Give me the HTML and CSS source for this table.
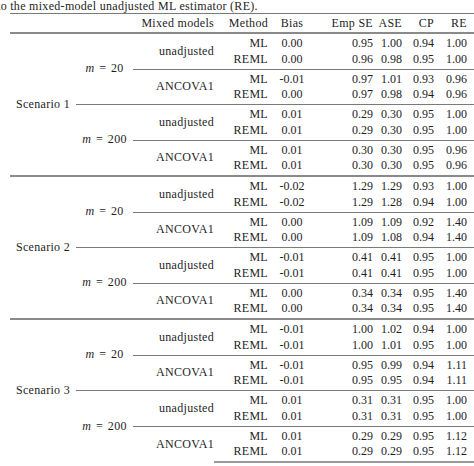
FILE: index.html
```html
<!DOCTYPE html>
<html>
<head>
<meta charset="utf-8">
<link rel="stylesheet" href="styles.css">
</head>
<body>
<div class="caption">to the mixed-model unadjusted ML estimator (RE).</div>
<table class="tbl">
<colgroup>
<col class="c-scen"><col class="c-m"><col class="c-mix"><col class="c-meth"><col class="c-bias"><col class="c-emp"><col class="c-ase"><col class="c-cp"><col class="c-re">
</colgroup>
<thead>
<tr><th></th><th></th><th class="r">Mixed models</th><th class="r">Method</th><th class="c">Bias</th><th class="r">Emp SE</th><th class="r">ASE</th><th class="r">CP</th><th class="r last">RE</th></tr>
</thead>
<tbody>
<tr class="a"><td class="lab" rowspan="8">Scenario 1</td><td class="lab" rowspan="4"><i>m</i><span class="eq">=</span>20</td><td class="lab mix" rowspan="2">unadjusted</td><td class="r w">ML</td><td class="c">0.00</td><td class="r">0.95</td><td class="r">1.00</td><td class="r">0.94</td><td class="r last">1.00</td></tr>
<tr class="b"><td class="r w">REML</td><td class="c">0.00</td><td class="r">0.96</td><td class="r">0.98</td><td class="r">0.95</td><td class="r last">1.00</td></tr>
<tr class="a g"><td class="lab mix" rowspan="2">ANCOVA1</td><td class="r w">ML</td><td class="c">-0.01</td><td class="r">0.97</td><td class="r">1.01</td><td class="r">0.93</td><td class="r last">0.96</td></tr>
<tr class="b"><td class="r w">REML</td><td class="c">0.00</td><td class="r">0.97</td><td class="r">0.98</td><td class="r">0.94</td><td class="r last">0.96</td></tr>
<tr class="a g"><td class="lab" rowspan="4"><i>m</i><span class="eq">=</span>200</td><td class="lab mix" rowspan="2">unadjusted</td><td class="r w">ML</td><td class="c">0.01</td><td class="r">0.29</td><td class="r">0.30</td><td class="r">0.95</td><td class="r last">1.00</td></tr>
<tr class="b"><td class="r w">REML</td><td class="c">0.01</td><td class="r">0.29</td><td class="r">0.30</td><td class="r">0.95</td><td class="r last">1.00</td></tr>
<tr class="a g"><td class="lab mix" rowspan="2">ANCOVA1</td><td class="r w">ML</td><td class="c">0.01</td><td class="r">0.30</td><td class="r">0.30</td><td class="r">0.95</td><td class="r last">0.96</td></tr>
<tr class="b"><td class="r w">REML</td><td class="c">0.01</td><td class="r">0.30</td><td class="r">0.30</td><td class="r">0.95</td><td class="r last">0.96</td></tr>

<tr class="a s"><td class="lab" rowspan="8">Scenario 2</td><td class="lab" rowspan="4"><i>m</i><span class="eq">=</span>20</td><td class="lab mix" rowspan="2">unadjusted</td><td class="r w">ML</td><td class="c">-0.02</td><td class="r">1.29</td><td class="r">1.29</td><td class="r">0.93</td><td class="r last">1.00</td></tr>
<tr class="b"><td class="r w">REML</td><td class="c">-0.02</td><td class="r">1.29</td><td class="r">1.28</td><td class="r">0.94</td><td class="r last">1.00</td></tr>
<tr class="a g"><td class="lab mix" rowspan="2">ANCOVA1</td><td class="r w">ML</td><td class="c">0.00</td><td class="r">1.09</td><td class="r">1.09</td><td class="r">0.92</td><td class="r last">1.40</td></tr>
<tr class="b"><td class="r w">REML</td><td class="c">0.00</td><td class="r">1.09</td><td class="r">1.08</td><td class="r">0.94</td><td class="r last">1.40</td></tr>
<tr class="a g"><td class="lab" rowspan="4"><i>m</i><span class="eq">=</span>200</td><td class="lab mix" rowspan="2">unadjusted</td><td class="r w">ML</td><td class="c">-0.01</td><td class="r">0.41</td><td class="r">0.41</td><td class="r">0.95</td><td class="r last">1.00</td></tr>
<tr class="b"><td class="r w">REML</td><td class="c">-0.01</td><td class="r">0.41</td><td class="r">0.41</td><td class="r">0.95</td><td class="r last">1.00</td></tr>
<tr class="a g"><td class="lab mix" rowspan="2">ANCOVA1</td><td class="r w">ML</td><td class="c">0.00</td><td class="r">0.34</td><td class="r">0.34</td><td class="r">0.95</td><td class="r last">1.40</td></tr>
<tr class="b"><td class="r w">REML</td><td class="c">0.00</td><td class="r">0.34</td><td class="r">0.34</td><td class="r">0.95</td><td class="r last">1.40</td></tr>

<tr class="a s"><td class="lab" rowspan="8">Scenario 3</td><td class="lab" rowspan="4"><i>m</i><span class="eq">=</span>20</td><td class="lab mix" rowspan="2">unadjusted</td><td class="r w">ML</td><td class="c">-0.01</td><td class="r">1.00</td><td class="r">1.02</td><td class="r">0.94</td><td class="r last">1.00</td></tr>
<tr class="b"><td class="r w">REML</td><td class="c">-0.01</td><td class="r">1.00</td><td class="r">1.01</td><td class="r">0.95</td><td class="r last">1.00</td></tr>
<tr class="a g"><td class="lab mix" rowspan="2">ANCOVA1</td><td class="r w">ML</td><td class="c">-0.01</td><td class="r">0.95</td><td class="r">0.99</td><td class="r">0.94</td><td class="r last">1.11</td></tr>
<tr class="b"><td class="r w">REML</td><td class="c">-0.01</td><td class="r">0.95</td><td class="r">0.95</td><td class="r">0.94</td><td class="r last">1.11</td></tr>
<tr class="a g"><td class="lab" rowspan="4"><i>m</i><span class="eq">=</span>200</td><td class="lab mix" rowspan="2">unadjusted</td><td class="r w">ML</td><td class="c">0.01</td><td class="r">0.31</td><td class="r">0.31</td><td class="r">0.95</td><td class="r last">1.00</td></tr>
<tr class="b"><td class="r w">REML</td><td class="c">0.01</td><td class="r">0.31</td><td class="r">0.31</td><td class="r">0.95</td><td class="r last">1.00</td></tr>
<tr class="a g"><td class="lab mix" rowspan="2">ANCOVA1</td><td class="r w">ML</td><td class="c">0.01</td><td class="r">0.29</td><td class="r">0.29</td><td class="r">0.95</td><td class="r last">1.12</td></tr>
<tr class="b end"><td class="r w">REML</td><td class="c">0.01</td><td class="r">0.29</td><td class="r">0.29</td><td class="r">0.95</td><td class="r last">1.12</td></tr>
</tbody>
</table>
</body>
</html>
```

FILE: styles.css
```css
html, body {
  margin: 0;
  padding: 0;
  background: #ffffff;
}
body {
  width: 474px;
  height: 466px;
  overflow: hidden;
  font-family: "Liberation Serif", "Times New Roman", serif;
  font-size: 12px;
  color: #1e1e1e;
}
.caption {
  height: 13px;
  line-height: 12px;
  margin-left: -3px;
  letter-spacing: 0.3px;
  white-space: nowrap;
}
.tbl {
  margin-left: 10px;
  width: 464px;
  border-collapse: collapse;
  table-layout: fixed;
}
.c-scen { width: 66px; }
.c-m { width: 57px; }
.c-mix { width: 81px; }
.c-meth { width: 54px; }
.c-bias { width: 48px; }
.c-emp { width: 57px; }
.c-ase { width: 29px; }
.c-cp { width: 32px; }
.c-re { width: 40px; }

.tbl th {
  font-weight: normal;
  height: 18px;
  line-height: 18px;
  padding: 0;
  letter-spacing: 0.3px;
  white-space: nowrap;
  border-top: 1px solid #7a7a7a;
  border-bottom: 2px solid #8a8a8a;
}
.tbl td {
  padding: 0;
  line-height: 15.5px;
  white-space: nowrap;
}
.tbl .r { text-align: right; }
.tbl .c { text-align: center; }
.tbl .w { letter-spacing: 0.3px; }
.tbl .last { padding-right: 7px; }
.tbl tr.a td { padding-top: 2px; }
.tbl tr.b td { padding-bottom: 1.5px; }
.tbl tr.g td { border-top: 1px solid #7a7a7a; }
.tbl tr.s td { border-top: 2px solid #8a8a8a; }
.tbl tr.end td { border-bottom: 2px solid #9a9a9a; }
.tbl tr td.lab {
  padding: 0;
  text-align: center;
  vertical-align: middle;
  letter-spacing: 0.3px;
}
.tbl tr td.mix {
  text-align: right;
}
.eq {
  margin: 0 0.4em;
}
```
